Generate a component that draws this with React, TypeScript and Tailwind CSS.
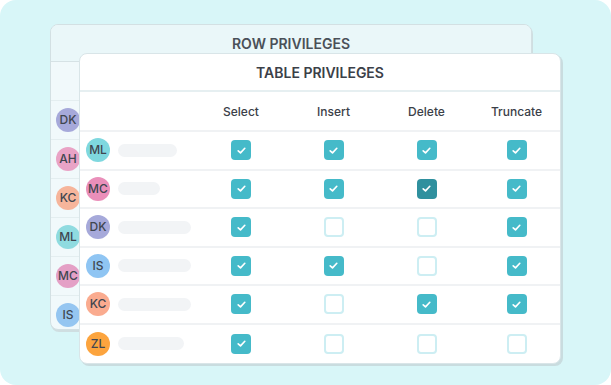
const people = [
  { initials: "ML", color: "bg-[#7fd8df]", bar: "w-[59px]", perms: [1, 1, 1, 1] },
  { initials: "MC", color: "bg-[#ea8fba]", bar: "w-[42px]", perms: [1, 1, 2, 1] },
  { initials: "DK", color: "bg-[#a6a9da]", bar: "w-[73px]", perms: [1, 0, 0, 1] },
  { initials: "IS", color: "bg-[#8fc5f3]", bar: "w-[73px]", perms: [1, 1, 0, 1] },
  { initials: "KC", color: "bg-[#faab8f]", bar: "w-[73px]", perms: [1, 0, 1, 1] },
  { initials: "ZL", color: "bg-[#fca43e]", bar: "w-[66px]", perms: [1, 0, 0, 0] },
];

const backRows = [
  { initials: "DK", color: "bg-[#a6a9da]" },
  { initials: "AH", color: "bg-[#e9a3c6]" },
  { initials: "KC", color: "bg-[#f6b59b]" },
  { initials: "ML", color: "bg-[#8fdbe0]" },
  { initials: "MC", color: "bg-[#e4a0c6]" },
  { initials: "IS", color: "bg-[#95c6f1]" },
];

const columns = ["Select", "Insert", "Delete", "Truncate"];

const Avatar = ({ initials, color }: { initials: string; color: string }) => (
  <div
    className={`${color} w-6 h-6 rounded-full flex items-center justify-center text-[12px] font-medium text-[#404650]`}
  >
    {initials}
  </div>
);

const Checkbox = ({ state }: { state: number }) => {
  if (state === 0) {
    return (
      <div className="w-5 h-5 rounded-[4px] border-2 border-[#cdeef3] bg-white" />
    );
  }
  return (
    <div
      className={`w-5 h-5 rounded-[4px] flex items-center justify-center ${
        state === 2 ? "bg-[#2f909e]" : "bg-[#45bac9]"
      }`}
    >
      <svg width="11" height="11" viewBox="0 0 10 10" fill="none">
        <path
          d="M2 5.3L4.1 7.2L8 3"
          stroke="white"
          strokeWidth="1.5"
          strokeLinecap="round"
          strokeLinejoin="round"
        />
      </svg>
    </div>
  );
};

export default function App() {
  return (
    <div className="w-[611px] h-[385px] bg-white font-['Inter',sans-serif]">
      <div className="relative w-full h-full rounded-[16px] bg-[#d8f6f8] pl-[50px] pt-[24px]">
        {/* back card */}
        <div className="w-[482px] h-[306px] rounded-[8px] border border-[#d3e0e3] bg-[#f1f9fb] shadow-[1px_2px_0_#cfdee1] overflow-hidden">
          <div className="h-[37px] flex items-center justify-center bg-[#eaf7f9] border-b border-[#d6e2e5] text-[14px] font-semibold text-[#4a5058]">
            ROW PRIVILEGES
          </div>
          <div className="h-[39px] border-b border-[#e4eef0]" />
          {backRows.map((r) => (
            <div
              key={r.initials}
              className="h-[39px] flex items-center pl-[5px] border-b border-[#e4eef0]"
            >
              <Avatar initials={r.initials} color={r.color} />
            </div>
          ))}
        </div>

        {/* front card */}
        <div className="absolute left-[79px] top-[53px] w-[482px] rounded-[8px] border border-[#d9e5e8] bg-white shadow-[2px_2px_0_#c9dcdf] overflow-hidden">
          <div className="h-[38px] flex items-center justify-center border-b-2 border-[#e6eff1] text-[14px] font-semibold text-[#3b4048]">
            TABLE PRIVILEGES
          </div>
          <div className="grid grid-cols-[115px_92px_93px_93px_1fr] h-[40px] items-center border-b-2 border-[#f0f2f4] text-[12px] font-medium text-[#3b4048]">
            <div />
            {columns.map((c) => (
              <div key={c} className="text-center pt-[2px]">
                {c}
              </div>
            ))}
          </div>
          {people.map((p, i) => (
            <div
              key={p.initials}
              className={`grid grid-cols-[115px_92px_93px_93px_1fr] h-[38.5px] items-center ${
                i < people.length - 1 ? "border-b-2 border-[#f0f2f4]" : ""
              }`}
            >
              <div className="flex items-center gap-[8px] pl-[6px]">
                <Avatar initials={p.initials} color={p.color} />
                <div className={`${p.bar} h-[13px] rounded-full bg-[#f2f4f6]`} />
              </div>
              {p.perms.map((s, j) => (
                <div key={j} className="flex justify-center">
                  <Checkbox state={s} />
                </div>
              ))}
            </div>
          ))}
        </div>
      </div>
    </div>
  );
}
